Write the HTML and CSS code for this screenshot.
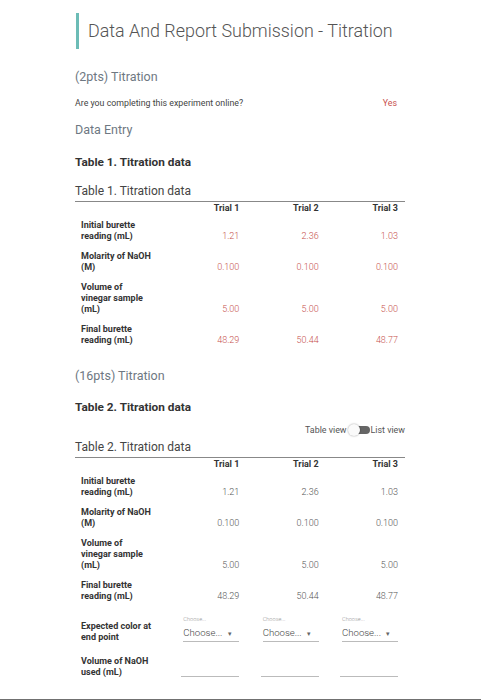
FILE: index.html
```html
<!DOCTYPE html>
<html lang="en">
<head>
  <meta charset="UTF-8">
  <meta name="viewport" content="width=device-width, initial-scale=1.0">
  <title>Data And Report Submission - Titration</title>
  <link rel="stylesheet" href="styles.css">
</head>
<body>
<div class="page">
  <h1 class="page-title">Data And Report Submission - Titration</h1>

  <div class="section-label">(2pts) Titration</div>
  <div class="question">
    <span>Are you completing this experiment online?</span>
    <span class="answer">Yes</span>
  </div>

  <div class="section-label data-entry">Data Entry</div>
  <h2 class="table-heading">Table 1. Titration data</h2>

  <table class="data-table readonly">
    <caption>Table 1. Titration data</caption>
    <thead>
      <tr><th></th><th>Trial 1</th><th>Trial 2</th><th>Trial 3</th></tr>
    </thead>
    <tbody>
      <tr><td class="row-label">Initial burette<br>reading (mL)</td><td>1.21</td><td>2.36</td><td>1.03</td></tr>
      <tr><td class="row-label">Molarity of NaOH<br>(M)</td><td>0.100</td><td>0.100</td><td>0.100</td></tr>
      <tr><td class="row-label">Volume of<br>vinegar sample<br>(mL)</td><td>5.00</td><td>5.00</td><td>5.00</td></tr>
      <tr><td class="row-label">Final burette<br>reading (mL)</td><td>48.29</td><td>50.44</td><td>48.77</td></tr>
    </tbody>
  </table>

  <div class="section-label pts16">(16pts) Titration</div>
  <h2 class="table-heading">Table 2. Titration data</h2>

  <div class="view-toggle">
    <span>Table view</span>
    <span class="switch"><span class="knob"></span></span>
    <span>List view</span>
  </div>

  <table class="data-table">
    <caption>Table 2. Titration data</caption>
    <thead>
      <tr><th></th><th>Trial 1</th><th>Trial 2</th><th>Trial 3</th></tr>
    </thead>
    <tbody>
      <tr><td class="row-label">Initial burette<br>reading (mL)</td><td>1.21</td><td>2.36</td><td>1.03</td></tr>
      <tr><td class="row-label">Molarity of NaOH<br>(M)</td><td>0.100</td><td>0.100</td><td>0.100</td></tr>
      <tr><td class="row-label">Volume of<br>vinegar sample<br>(mL)</td><td>5.00</td><td>5.00</td><td>5.00</td></tr>
      <tr><td class="row-label">Final burette<br>reading (mL)</td><td>48.29</td><td>50.44</td><td>48.77</td></tr>
      <tr class="select-row">
        <td class="row-label">Expected color at<br>end point</td>
        <td><div class="choose"><div class="choose-hint">Choose...</div><div class="choose-box">Choose... <span class="arrow">&#9662;</span></div></div></td>
        <td><div class="choose"><div class="choose-hint">Choose...</div><div class="choose-box">Choose... <span class="arrow">&#9662;</span></div></div></td>
        <td><div class="choose"><div class="choose-hint">Choose...</div><div class="choose-box">Choose... <span class="arrow">&#9662;</span></div></div></td>
      </tr>
      <tr class="input-row">
        <td class="row-label">Volume of NaOH<br>used (mL)</td>
        <td><div class="text-input"></div></td>
        <td><div class="text-input"></div></td>
        <td><div class="text-input"></div></td>
      </tr>
    </tbody>
  </table>
</div>
</body>
</html>
```

FILE: styles.css
```css
body {
  margin: 0;
  font-family: Roboto, "Liberation Sans", Arial, sans-serif;
  color: #333;
  background-color: #fff;
}

.page {
  box-sizing: border-box;
  height: 700px;
  padding: 13px 0 0 75px;
  border-bottom: 1px solid #707070;
  overflow: hidden;
}

.page-title {
  margin: 0 0 0 1px;
  width: 320px;
  padding: 6px 0 6px 9px;
  border-left: 3px solid #6cbcb6;
  font-size: 17.9px;
  font-weight: 300;
  line-height: 24px;
  color: #555;
}

.section-label {
  margin-top: 20px;
  font-size: 12.5px;
  line-height: 16px;
  color: #6e7882;
}

.question {
  width: 322px;
  display: flex;
  justify-content: space-between;
  margin-top: 13px;
  font-size: 8.8px;
  line-height: 11px;
  color: #444;
}

.answer {
  color: #c9514e;
}

.section-label.data-entry {
  margin-top: 13px;
}

.section-label.pts16 {
  margin-top: 17px;
}

.table-heading {
  margin: 16px 0 0;
  font-size: 11.8px;
  font-weight: bold;
  line-height: 16px;
  color: #333;
}

.pts16 + .table-heading {
  margin-top: 15px;
}

.data-table {
  width: 330px;
  table-layout: fixed;
  border-collapse: collapse;
  margin-top: 13px;
  font-size: 9px;
  line-height: 11px;
}

.data-table caption {
  text-align: left;
  font-size: 12px;
  line-height: 16px;
  color: #444;
  padding-bottom: 2px;
  border-bottom: 1px solid #888;
}

.data-table th {
  font-weight: bold;
  text-align: right;
  padding: 1px 7px 2px 0;
  color: #333;
}

.data-table th:first-child {
  width: 85px;
}

.data-table td {
  vertical-align: bottom;
  text-align: right;
  padding: 4px 7px 5px 0;
  color: #555;
  font-weight: 300;
}

.data-table.readonly td {
  color: #c64f4c;
}

.data-table td.row-label {
  text-align: left;
  padding-left: 6px;
  white-space: nowrap;
  font-weight: bold;
  color: #333;
}

.select-row td {
  padding-top: 8px;
  padding-bottom: 5px;
}

.select-row td.row-label {
  padding-bottom: 4px;
}

.input-row td {
  padding-bottom: 6px;
}

.input-row td.row-label {
  padding-bottom: 5px;
}

.view-toggle {
  width: 330px;
  display: flex;
  justify-content: flex-end;
  align-items: center;
  margin-top: 9px;
  font-size: 8.9px;
  line-height: 12px;
  color: #555;
}

.switch {
  position: relative;
  width: 17px;
  height: 8px;
  margin: 0 1px 0 6px;
  border-radius: 4px;
  background-color: #666;
}

.knob {
  position: absolute;
  left: -5px;
  top: -2px;
  width: 12px;
  height: 12px;
  border-radius: 50%;
  background-color: #fafafa;
  box-shadow: 0 0 2px rgba(0, 0, 0, 0.4);
}

.view-toggle + .data-table {
  margin-top: 3px;
}

.choose {
  width: 56px;
  margin-left: auto;
  text-align: left;
}

.choose-hint {
  font-size: 5.6px;
  line-height: 8px;
  color: #999;
  margin-bottom: 3px;
}

.choose-box {
  font-size: 9.6px;
  line-height: 13px;
  color: #444;
  border-bottom: 1px solid #bbb;
  white-space: nowrap;
}

.arrow {
  font-size: 7px;
  margin-left: 3px;
  color: #666;
}

.text-input {
  width: 58px;
  height: 25px;
  margin-left: auto;
  border-bottom: 1px solid #bbb;
}
```
